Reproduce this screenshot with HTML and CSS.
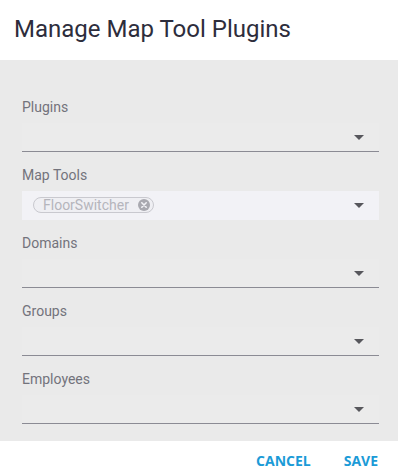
FILE: index.html
```html
<!DOCTYPE html>
<html>
<head>
<meta charset="utf-8">
<link rel="stylesheet" href="styles.css">
</head>
<body>
<div class="dialog">
  <div class="header">Manage Map Tool Plugins</div>
  <div class="content">
    <div class="field">
      <div class="label">Plugins</div>
      <div class="select"><div class="value"></div><span class="arrow"></span></div>
    </div>
    <div class="field">
      <div class="label">Map Tools</div>
      <div class="select disabled">
        <div class="value">
          <span class="chip">FloorSwitcher<span class="chip-x"><svg width="12" height="12" viewBox="0 0 12 12"><circle cx="6" cy="6" r="6" fill="#a9a9b0"/><path d="M3.8 3.8L8.2 8.2M8.2 3.8L3.8 8.2" stroke="#f2f2f6" stroke-width="1.6" stroke-linecap="round"/></svg></span></span>
        </div>
        <span class="arrow"></span>
      </div>
    </div>
    <div class="field">
      <div class="label">Domains</div>
      <div class="select"><div class="value"></div><span class="arrow"></span></div>
    </div>
    <div class="field">
      <div class="label">Groups</div>
      <div class="select"><div class="value"></div><span class="arrow"></span></div>
    </div>
    <div class="field">
      <div class="label">Employees</div>
      <div class="select"><div class="value"></div><span class="arrow"></span></div>
    </div>
  </div>
  <div class="footer">
    <span class="btn">CANCEL</span>
    <span class="btn">SAVE</span>
  </div>
</div>
</body>
</html>
```
FILE: styles.css
```css
html, body {
  margin: 0;
  padding: 0;
  background: #ffffff;
}
.dialog {
  width: 398px;
  height: 476px;
  display: flex;
  flex-direction: column;
  font-family: Roboto, "Liberation Sans", sans-serif;
}
.header {
  height: 60px;
  line-height: 58px;
  padding-left: 14px;
  font-size: 24px;
  color: #2d2d3c;
}
.content {
  background: #eaeaea;
  padding: 37px 19px 17px 22px;
  display: flex;
  flex-direction: column;
  gap: 13px;
}
.field {
  display: flex;
  flex-direction: column;
}
.label {
  font-size: 14px;
  line-height: 20px;
  height: 20px;
  color: #73737c;
  margin-bottom: 6px;
}
.select {
  height: 28px;
  border-bottom: 1px solid #8b8b94;
  background: #ebebeb;
  display: flex;
  align-items: center;
  padding: 0 15px 0 11px;
}
.select.disabled {
  background: #f2f2f6;
  border-bottom-color: #f2f2f6;
}
.value {
  flex: 1;
  display: flex;
  align-items: center;
}
.arrow {
  width: 0;
  height: 0;
  border-left: 5px solid transparent;
  border-right: 5px solid transparent;
  border-top: 5px solid #57575c;
  margin-top: 1px;
}
.chip {
  display: inline-flex;
  align-items: center;
  height: 14px;
  padding: 0 3px 0 9px;
  border: 1px solid #c9c9cf;
  border-radius: 8px;
  font-size: 14px;
  line-height: 14px;
  color: #b5b5bc;
  background: #efeff3;
}
.chip-x {
  display: inline-flex;
  margin-left: 9px;
}
.footer {
  flex: 1;
  display: flex;
  justify-content: flex-end;
  gap: 33px;
  padding: 10px 20px 0 0;
}
.btn {
  font-family: "Open Sans", "Liberation Sans", sans-serif;
  font-weight: 700;
  font-size: 14px;
  line-height: 19px;
  height: 19px;
  color: #1b9bd7;
}
```
